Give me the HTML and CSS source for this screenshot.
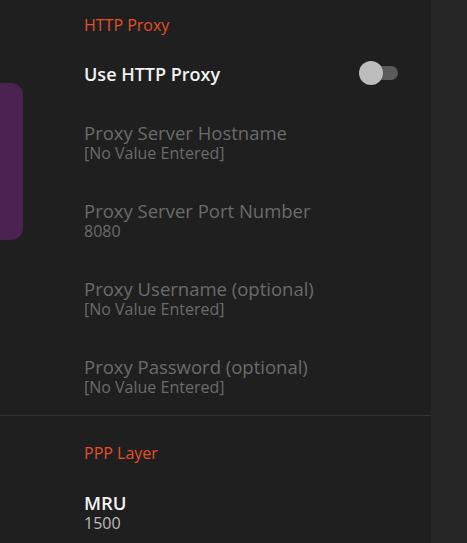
FILE: index.html
```html
<!DOCTYPE html>
<html>
<head>
<meta charset="utf-8">
<link rel="stylesheet" href="styles.css">
</head>
<body>
<div class="screen">
  <div class="side">
    <div class="tab"></div>
  </div>
  <div class="panel">
    <div class="section-title first">HTTP Proxy</div>
    <div class="toggle-row">
      <span class="toggle-label">Use HTTP Proxy</span>
      <span class="switch"><span class="track"></span><span class="thumb"></span></span>
    </div>
    <div class="item disabled">
      <div class="label">Proxy Server Hostname</div>
      <div class="value">[No Value Entered]</div>
    </div>
    <div class="item disabled">
      <div class="label">Proxy Server Port Number</div>
      <div class="value">8080</div>
    </div>
    <div class="item disabled">
      <div class="label">Proxy Username (optional)</div>
      <div class="value">[No Value Entered]</div>
    </div>
    <div class="item disabled">
      <div class="label">Proxy Password (optional)</div>
      <div class="value">[No Value Entered]</div>
    </div>
    <div class="divider"></div>
    <div class="section-title second">PPP Layer</div>
    <div class="item enabled">
      <div class="label">MRU</div>
      <div class="value">1500</div>
    </div>
  </div>
  <div class="strip"></div>
</div>
</body>
</html>
```

FILE: styles.css
```css
html, body {
  margin: 0;
  padding: 0;
  background: #1f1f1f;
}
body {
  font-family: "Open Sans", "Noto Sans", sans-serif;
  width: 467px;
  height: 543px;
  overflow: hidden;
}
.screen {
  display: flex;
  width: 467px;
  height: 543px;
}
.side {
  width: 84px;
  flex: none;
  padding-top: 83px;
  box-sizing: border-box;
}
.tab {
  width: 23px;
  height: 157px;
  background: #4a2350;
  border-radius: 0 12px 12px 0;
}
.panel {
  width: 347px;
  flex: none;
  display: flex;
  flex-direction: column;
}
.panel > * {
  flex: none;
}
.strip {
  flex: 1;
  background: #262626;
}
.section-title {
  color: #e4502a;
  font-size: 16px;
  line-height: 22px;
  font-weight: 500;
}
.section-title.first {
  padding-top: 14px;
  height: 43px;
  box-sizing: border-box;
}
.section-title.second {
  padding-top: 26px;
  height: 62px;
  box-sizing: border-box;
}
.toggle-row {
  height: 60px;
  display: flex;
  align-items: center;
  justify-content: space-between;
  padding-right: 33px;
}
.toggle-label {
  color: #f2f2f2;
  font-size: 18px;
  font-weight: 600;
  position: relative;
  top: 1px;
}
.switch {
  position: relative;
  width: 39px;
  height: 24px;
}
.track {
  position: absolute;
  left: 6px;
  right: 0;
  top: 5px;
  height: 14px;
  border-radius: 7px;
  background: #5a5a5a;
}
.thumb {
  position: absolute;
  left: 0;
  top: 0;
  width: 24px;
  height: 24px;
  border-radius: 50%;
  background: #bdbdbd;
}
.item {
  height: 78px;
  padding-top: 19px;
  box-sizing: border-box;
}
.item.enabled {
  height: auto;
  padding-top: 14px;
}
.label {
  font-size: 18.5px;
  line-height: 22px;
}
.value {
  font-size: 16px;
  line-height: 18px;
}
.disabled .label,
.disabled .value {
  color: #6b6b6b;
}
.enabled .label {
  color: #f2f2f2;
  font-weight: 600;
}
.enabled .value {
  color: #bcbcbc;
}
.divider {
  height: 1px;
  background: #333333;
  margin-left: -84px;
}
```
